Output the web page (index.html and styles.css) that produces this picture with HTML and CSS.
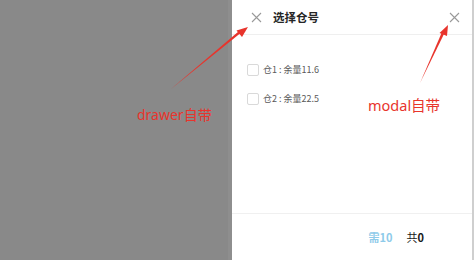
FILE: index.html
```html
<!DOCTYPE html>
<html>
<head>
<meta charset="utf-8">
<link rel="stylesheet" href="styles.css">
</head>
<body>
<div class="screen">
  <div class="mask"></div>
  <div class="drawer">
    <div class="header">
      <span class="close">
        <svg width="11" height="11" viewBox="0 0 11 11"><path d="M1 1L10 10M10 1L1 10" stroke="#999" stroke-width="1.1"/></svg>
      </span>
      <span class="title">选择仓号</span>
      <span class="spacer"></span>
      <span class="close right">
        <svg width="11" height="11" viewBox="0 0 11 11"><path d="M1 1L10 10M10 1L1 10" stroke="#999" stroke-width="1.1"/></svg>
      </span>
    </div>
    <div class="body">
      <label class="item"><span class="box"></span><span class="label">仓1 : 余量11.6</span></label>
      <label class="item"><span class="box"></span><span class="label">仓2 : 余量22.5</span></label>
    </div>
    <div class="footer">
      <span class="need">需10</span>
      <span class="total">共<b>0</b></span>
    </div>
  </div>
  <div class="note note-drawer">drawer自带</div>
  <div class="note note-modal">modal自带</div>
  <svg class="arrows" width="474" height="260" viewBox="0 0 474 260">
    <polygon points="171,89 240,33.5 238.5,31.5" fill="#e8342c"/>
    <polygon points="248,27 236.5,30.5 242,37" fill="#e8342c"/>
    <polygon points="420,83 444.5,33 442,32" fill="#e8342c"/>
    <polygon points="448,25 439.5,33 447,36" fill="#e8342c"/>
  </svg>
</div>
</body>
</html>
```
FILE: styles.css
```css
html, body {
  margin: 0;
  padding: 0;
  background: #ffffff;
}
.screen {
  position: relative;
  width: 474px;
  height: 260px;
  display: flex;
  overflow: hidden;
  font-family: "Noto Sans", "Noto Sans CJK SC", sans-serif;
}
.mask {
  width: 228px;
  background: #898989;
}
.drawer {
  width: 246px;
  display: flex;
  flex-direction: column;
  background: #ffffff;
  border-left: 4px solid #8e8e8e;
  border-right: 2px solid #cfcfcf;
  box-sizing: border-box;
  background-clip: padding-box;
}
.header {
  height: 35px;
  box-sizing: border-box;
  border-bottom: 1px solid #efefef;
  display: flex;
  align-items: center;
  padding: 0 12px 0 19px;
}
.close {
  width: 11px;
  height: 11px;
  display: flex;
}
.title {
  margin-left: 11px;
  font-size: 11.5px;
  font-weight: 600;
  color: #262626;
  font-family: "Noto Sans CJK SC", sans-serif;
}
.spacer {
  flex: 1;
}
.body {
  flex: 1;
  padding: 29px 0 0 15px;
  display: flex;
  flex-direction: column;
  gap: 18px;
}
.item {
  display: flex;
  align-items: center;
  height: 11px;
}
.box {
  width: 10px;
  height: 10px;
  border: 1px solid #d9d9d9;
  border-radius: 2px;
}
.label {
  margin-left: 4px;
  font-size: 9px;
  color: #595959;
  font-family: "Noto Sans CJK SC", sans-serif;
}
.footer {
  height: 47px;
  box-sizing: border-box;
  border-top: 1px solid #f0f0f0;
  display: flex;
  align-items: center;
  justify-content: flex-end;
  padding-right: 48px;
  gap: 14px;
  font-size: 11px;
  font-family: "Noto Sans CJK SC", sans-serif;
}
.need {
  color: #8ecbea;
  font-weight: 600;
}
.total {
  color: #1a1a1a;
}
.total b {
  font-weight: 700;
}
.note {
  position: absolute;
  color: #e8342c;
  font-size: 14px;
  font-family: "Noto Sans", "Noto Sans CJK SC", sans-serif;
  white-space: nowrap;
}
.note-drawer {
  left: 137px;
  top: 104px;
}
.note-modal {
  left: 368px;
  top: 94px;
  font-size: 14.5px;
}
.arrows {
  position: absolute;
  left: 0;
  top: 0;
  pointer-events: none;
}
```
